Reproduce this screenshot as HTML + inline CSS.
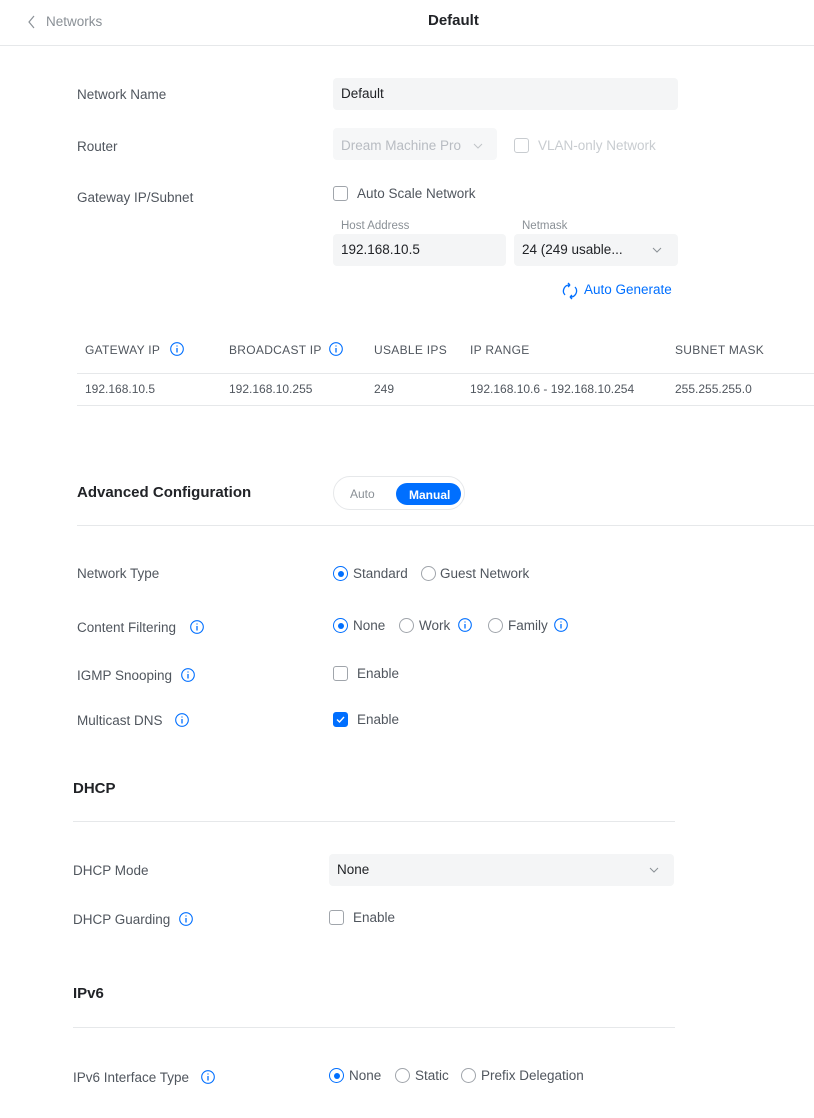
<!DOCTYPE html>
<html><head><meta charset="utf-8"><style>
*{margin:0;padding:0;box-sizing:border-box}
body{width:814px;height:1118px;background:#fff;font-family:"Liberation Sans",sans-serif;font-size:13.5px;color:#50565e;position:relative;overflow:hidden}
.a{position:absolute;white-space:nowrap;line-height:16px;margin-top:1px}
.lbl{color:#50565e}
.v{color:#212327}
.in{position:absolute;background:#f4f5f6;border-radius:4px}
.cb{position:absolute;width:15px;height:15px;border:1px solid #a0a5ab;border-radius:3px;background:#fff}
.rd{position:absolute;width:15px;height:15px;border:1px solid #a0a5ab;border-radius:50%;background:#fff}
.rd.on{border-color:#006fff}
.rd.on:after{content:"";position:absolute;left:3.5px;top:3.5px;width:6px;height:6px;border-radius:50%;background:#006fff}
.ln{position:absolute;height:1px;background:#e6e8ea}
.info{position:absolute;width:14px;height:14px}
.th{font-size:12px;color:#50565e;letter-spacing:.3px}
.td{font-size:12px;color:#50565e}
.h{font-weight:bold;color:#212327;font-size:15px}
</style></head><body>
<svg class="a" style="left:27px;top:14px" width="10" height="14" viewBox="0 0 10 14"><path d="M7 1L2 7l5 6" fill="none" stroke="#8a9096" stroke-width="1.2"/></svg>
<div class="a" style="left:46px;top:13px;color:#8a9096">Networks</div>
<div class="a h" style="left:428px;top:12px">Default</div>
<div class="ln" style="left:0;top:45px;width:814px"></div>

<div class="a lbl" style="left:77px;top:86px">Network Name</div>
<div class="in" style="left:333px;top:78px;width:345px;height:32px"></div>
<div class="a v" style="left:341px;top:85px">Default</div>

<div class="a lbl" style="left:77px;top:138px">Router</div>
<div class="in" style="left:333px;top:128px;width:164px;height:32px;background:#f6f7f8"></div>
<div class="a" style="left:341px;top:137px;color:#b8bcc2">Dream Machine Pro</div>
<svg class="a" style="left:473px;top:142px" width="10" height="6"><path d="M1 1l4 4 4-4" fill="none" stroke="#c0c4c8" stroke-width="1"/></svg>
<div class="cb" style="left:514px;top:138px;border-color:#c8ccd0"></div>
<div class="a" style="left:538px;top:137px;color:#c8ccd0">VLAN-only Network</div>

<div class="a lbl" style="left:77px;top:189px">Gateway IP/Subnet</div>
<div class="cb" style="left:333px;top:186px"></div>
<div class="a lbl" style="left:357px;top:185px">Auto Scale Network</div>
<div class="a" style="left:341px;top:217px;font-size:11.5px;color:#8a9096">Host Address</div>
<div class="a" style="left:522px;top:217px;font-size:11.5px;color:#8a9096">Netmask</div>
<div class="in" style="left:333px;top:234px;width:173px;height:32px"></div>
<div class="a v" style="left:341px;top:241px">192.168.10.5</div>
<div class="in" style="left:514px;top:234px;width:164px;height:32px"></div>
<div class="a v" style="left:522px;top:241px">24 (249 usable...</div>
<svg class="a" style="left:652px;top:246px" width="10" height="6"><path d="M1 1l4 4 4-4" fill="none" stroke="#8a9096" stroke-width="1"/></svg>
<svg class="a" style="left:561px;top:281px" width="18" height="18" viewBox="0 0 18 18"><path d="M4 13A6 6 0 0 1 9 3M9 3L7 1M9 3L7 5M14 5A6 6 0 0 1 9 15M9 15l2 2M9 15l2-2" fill="none" stroke="#006fff" stroke-width="1.3"/></svg>
<div class="a" style="left:584px;top:281px;color:#006fff">Auto Generate</div>

<div class="a th" style="left:85px;top:341px">GATEWAY IP</div>
<svg class="info" style="left:170px;top:342px" viewBox="0 0 14 14"><circle cx="7" cy="7" r="6.3" fill="none" stroke="#006fff" stroke-width="1.1"/><path d="M7 6v4.5M7 3.5v1" stroke="#006fff" stroke-width="1.3"/></svg>
<div class="a th" style="left:229px;top:341px">BROADCAST IP</div>
<svg class="info" style="left:329px;top:342px" viewBox="0 0 14 14"><circle cx="7" cy="7" r="6.3" fill="none" stroke="#006fff" stroke-width="1.1"/><path d="M7 6v4.5M7 3.5v1" stroke="#006fff" stroke-width="1.3"/></svg>
<div class="a th" style="left:374px;top:341px">USABLE IPS</div>
<div class="a th" style="left:470px;top:341px">IP RANGE</div>
<div class="a th" style="left:675px;top:341px">SUBNET MASK</div>
<div class="ln" style="left:77px;top:373px;width:737px"></div>
<div class="a td" style="left:85px;top:380px">192.168.10.5</div>
<div class="a td" style="left:229px;top:380px">192.168.10.255</div>
<div class="a td" style="left:374px;top:380px">249</div>
<div class="a td" style="left:470px;top:380px">192.168.10.6 - 192.168.10.254</div>
<div class="a td" style="left:675px;top:380px">255.255.255.0</div>
<div class="ln" style="left:77px;top:405px;width:737px"></div>

<div class="a h" style="left:77px;top:484px">Advanced Configuration</div>
<div style="position:absolute;left:333px;top:476px;width:132px;height:34px;border:1px solid #e6e8ea;border-radius:17px"></div>
<div class="a" style="left:350px;top:485px;font-size:12px;color:#8a9096">Auto</div>
<div style="position:absolute;left:396px;top:483px;width:65px;height:22px;border-radius:11px;background:#006fff"></div>
<div class="a" style="left:409px;top:486px;font-size:12px;color:#fff;font-weight:bold">Manual</div>
<div class="ln" style="left:77px;top:525px;width:737px"></div>

<div class="a lbl" style="left:77px;top:565px">Network Type</div>
<div class="rd on" style="left:333px;top:566px"></div>
<div class="a lbl" style="left:353px;top:565px">Standard</div>
<div class="rd" style="left:421px;top:566px"></div>
<div class="a lbl" style="left:440px;top:565px">Guest Network</div>

<div class="a lbl" style="left:77px;top:619px">Content Filtering</div>
<svg class="info" style="left:190px;top:620px" viewBox="0 0 14 14"><circle cx="7" cy="7" r="6.3" fill="none" stroke="#006fff" stroke-width="1.1"/><path d="M7 6v4.5M7 3.5v1" stroke="#006fff" stroke-width="1.3"/></svg>
<div class="rd on" style="left:333px;top:618px"></div>
<div class="a lbl" style="left:353px;top:617px">None</div>
<div class="rd" style="left:399px;top:618px"></div>
<div class="a lbl" style="left:419px;top:617px">Work</div>
<svg class="info" style="left:458px;top:618px" viewBox="0 0 14 14"><circle cx="7" cy="7" r="6.3" fill="none" stroke="#006fff" stroke-width="1.1"/><path d="M7 6v4.5M7 3.5v1" stroke="#006fff" stroke-width="1.3"/></svg>
<div class="rd" style="left:488px;top:618px"></div>
<div class="a lbl" style="left:508px;top:617px">Family</div>
<svg class="info" style="left:554px;top:618px" viewBox="0 0 14 14"><circle cx="7" cy="7" r="6.3" fill="none" stroke="#006fff" stroke-width="1.1"/><path d="M7 6v4.5M7 3.5v1" stroke="#006fff" stroke-width="1.3"/></svg>

<div class="a lbl" style="left:77px;top:667px">IGMP Snooping</div>
<svg class="info" style="left:181px;top:668px" viewBox="0 0 14 14"><circle cx="7" cy="7" r="6.3" fill="none" stroke="#006fff" stroke-width="1.1"/><path d="M7 6v4.5M7 3.5v1" stroke="#006fff" stroke-width="1.3"/></svg>
<div class="cb" style="left:333px;top:666px"></div>
<div class="a lbl" style="left:357px;top:665px">Enable</div>

<div class="a lbl" style="left:77px;top:712px">Multicast DNS</div>
<svg class="info" style="left:175px;top:713px" viewBox="0 0 14 14"><circle cx="7" cy="7" r="6.3" fill="none" stroke="#006fff" stroke-width="1.1"/><path d="M7 6v4.5M7 3.5v1" stroke="#006fff" stroke-width="1.3"/></svg>
<div class="cb" style="left:333px;top:712px;background:#006fff;border-color:#006fff"></div>
<svg class="a" style="left:333px;top:711px" width="15" height="15"><path d="M4 7.5l2.5 2.5L11 5" fill="none" stroke="#fff" stroke-width="1.4"/></svg>
<div class="a lbl" style="left:357px;top:711px">Enable</div>

<div class="a h" style="left:73px;top:780px">DHCP</div>
<div class="ln" style="left:73px;top:821px;width:602px"></div>
<div class="a lbl" style="left:73px;top:862px">DHCP Mode</div>
<div class="in" style="left:329px;top:854px;width:345px;height:32px"></div>
<div class="a v" style="left:337px;top:861px">None</div>
<svg class="a" style="left:649px;top:866px" width="10" height="6"><path d="M1 1l4 4 4-4" fill="none" stroke="#8a9096" stroke-width="1"/></svg>
<div class="a lbl" style="left:73px;top:911px">DHCP Guarding</div>
<svg class="info" style="left:179px;top:912px" viewBox="0 0 14 14"><circle cx="7" cy="7" r="6.3" fill="none" stroke="#006fff" stroke-width="1.1"/><path d="M7 6v4.5M7 3.5v1" stroke="#006fff" stroke-width="1.3"/></svg>
<div class="cb" style="left:329px;top:910px"></div>
<div class="a lbl" style="left:353px;top:909px">Enable</div>

<div class="a h" style="left:73px;top:985px">IPv6</div>
<div class="ln" style="left:73px;top:1027px;width:602px"></div>
<div class="a lbl" style="left:73px;top:1069px">IPv6 Interface Type</div>
<svg class="info" style="left:201px;top:1070px" viewBox="0 0 14 14"><circle cx="7" cy="7" r="6.3" fill="none" stroke="#006fff" stroke-width="1.1"/><path d="M7 6v4.5M7 3.5v1" stroke="#006fff" stroke-width="1.3"/></svg>
<div class="rd on" style="left:329px;top:1068px"></div>
<div class="a lbl" style="left:349px;top:1067px">None</div>
<div class="rd" style="left:395px;top:1068px"></div>
<div class="a lbl" style="left:415px;top:1067px">Static</div>
<div class="rd" style="left:461px;top:1068px"></div>
<div class="a lbl" style="left:481px;top:1067px">Prefix Delegation</div>
</body></html>
